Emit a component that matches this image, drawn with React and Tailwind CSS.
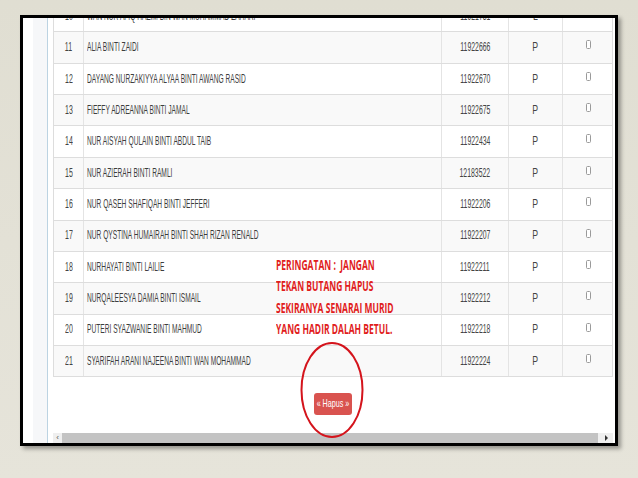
import React from "react";

const rows = [
  ["10", "WAN NUR AFIQ HAZIM BIN WAN MUHAMMAD ZAHARI", "11921731", "L"],
  ["11", "ALIA BINTI ZAIDI", "11922666", "P"],
  ["12", "DAYANG NURZAKIYYA ALYAA BINTI AWANG RASID", "11922670", "P"],
  ["13", "FIEFFY ADREANNA BINTI JAMAL", "11922675", "P"],
  ["14", "NUR AISYAH QULAIN BINTI ABDUL TAIB", "11922434", "P"],
  ["15", "NUR AZIERAH BINTI RAMLI", "12183522", "P"],
  ["16", "NUR QASEH SHAFIQAH BINTI JEFFERI", "11922206", "P"],
  ["17", "NUR QYSTINA HUMAIRAH BINTI SHAH RIZAN RENALD", "11922207", "P"],
  ["18", "NURHAYATI BINTI LAILIE", "11922211", "P"],
  ["19", "NURQALEESYA DAMIA BINTI ISMAIL", "11922212", "P"],
  ["20", "PUTERI SYAZWANIE BINTI MAHMUD", "11922218", "P"],
  ["21", "SYARIFAH ARANI NAJEENA BINTI WAN MOHAMMAD", "11922224", "P"],
];

function Row({ r, i }) {
  const striped = i % 2 === 1;
  return (
    <div
      className={`grid grid-cols-[30px_358px_67px_54px_51px] h-[31.36px] border-b border-[#dddddd] ${
        striped ? "bg-[#f9f9f9]" : "bg-white"
      }`}
    >
      <div className="flex items-center justify-center border-r border-[#e4e4e4] overflow-hidden">
        <span className="inline-block scale-x-[0.56] text-[12.5px] text-[#444]">{r[0]}</span>
      </div>
      <div className="flex items-center pl-[3px] border-r border-[#e4e4e4] overflow-hidden">
        <span className="inline-block whitespace-nowrap origin-left scale-x-[0.53] text-[12.5px] text-[#3d3d3d]">
          {r[1]}
        </span>
      </div>
      <div className="flex items-center justify-center border-r border-[#e4e4e4] overflow-hidden">
        <span className="inline-block scale-x-[0.55] text-[12.5px] text-[#444]">{r[2]}</span>
      </div>
      <div className="flex items-center justify-center border-r border-[#e4e4e4]">
        <span className="inline-block scale-x-[0.7] text-[12.5px] text-[#444]">{r[3]}</span>
      </div>
      <div className="flex justify-center pt-[8px]">
        <div className="w-[5px] h-[9px] border border-[#9a9a9a] rounded-[1.5px] bg-white" />
      </div>
    </div>
  );
}

export default function App() {
  return (
    <div
      className="relative w-[638px] h-[478px] overflow-hidden bg-gradient-to-b from-[#e0ded2] to-[#e6e4da] pt-[15px] pl-[20px]"
      style={{ fontFamily: '"Liberation Sans", Arial, sans-serif' }}
    >
      <div className="w-[598px] h-[431px] border-[3px] border-black bg-white flex overflow-hidden shadow-[3px_3px_4px_rgba(0,0,0,0.35)]">
        <div className="w-[10px] shrink-0 bg-white" />
        <div className="w-[15px] shrink-0 bg-[#f6f7f9] border-r border-[#bcd3e2]" />
        <div className="flex-1 flex flex-col pl-[5px] overflow-hidden">
          <div className="mt-[-17px] w-[560px] border-l border-r border-[#dddddd]">
            {rows.map((r, i) => (
              <Row key={r[0]} r={r} i={i} />
            ))}
          </div>
          <div className="h-[56px] w-[560px] flex justify-center pt-[16px]">
            <div className="w-[38px] h-[22px] rounded-[3px] bg-[#d9534f] flex items-center justify-center">
              <span className="inline-block scale-x-[0.68] text-[10.5px] text-white whitespace-nowrap">
                « Hapus »
              </span>
            </div>
          </div>
          <div className="h-[10px] w-[560px] flex bg-[#efefef]">
            <div className="w-[9px] flex items-center justify-center text-[#555] text-[8px] leading-none">‹</div>
            <div className="w-[536px] bg-[#c3c3c3]" />
            <div className="flex-1 flex items-center justify-end pr-[5px]">
              <svg width="3" height="6" viewBox="0 0 3 6">
                <path d="M0 0 L3 3 L0 6 Z" fill="#333" />
              </svg>
            </div>
          </div>
        </div>
      </div>

      <div
        className="absolute left-[276px] top-[255px] text-[#e11d1d] font-bold text-[13.5px] leading-[21.4px] whitespace-pre origin-left scale-x-[0.63]"
        style={{ fontFamily: '"Open Sans", "Liberation Sans", sans-serif' }}
      >
        <div>PERINGATAN :  JANGAN</div>
        <div>TEKAN BUTANG HAPUS</div>
        <div>SEKIRANYA SENARAI MURID</div>
        <div>YANG HADIR DALAH BETUL.</div>
      </div>

      <svg className="absolute left-[299px] top-[340px]" width="66" height="100" viewBox="0 0 66 100">
        <ellipse cx="33" cy="50" rx="30.5" ry="47" fill="none" stroke="#d4141c" strokeWidth="2" />
      </svg>
    </div>
  );
}
